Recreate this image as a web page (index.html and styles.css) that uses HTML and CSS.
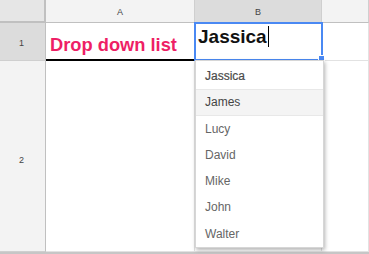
FILE: index.html
```html
<!DOCTYPE html>
<html lang="en">
<head>
    <meta charset="UTF-8">
    <title>Drop down list</title>
    <link rel="stylesheet" href="styles.css">
</head>
<body>
    <div class="sheet">
        <div class="corner"></div>
        <div class="col-head">A</div>
        <div class="col-head selected">B</div>
        <div class="col-head"></div>

        <div class="row-head selected">1</div>
        <div class="cell title-cell">Drop down list</div>
        <div class="cell active-cell">
            <span class="edit-text">Jassica</span><span class="caret"></span>
            <span class="fill-handle"></span>
            <div class="dropdown">
                <div class="option first">Jassica</div>
                <div class="option hover">James</div>
                <div class="option">Lucy</div>
                <div class="option">David</div>
                <div class="option">Mike</div>
                <div class="option">John</div>
                <div class="option">Walter</div>
            </div>
        </div>
        <div class="cell"></div>

        <div class="row-head tall">2</div>
        <div class="cell"></div>
        <div class="cell"></div>
        <div class="cell"></div>
    </div>
</body>
</html>
```

FILE: styles.css
```css
body {
    margin: 0;
    font-family: Arial, "Liberation Sans", sans-serif;
    background: #fff;
}
.sheet {
    display: grid;
    grid-template-columns: 46px 149px 127px 47px;
    grid-template-rows: 23px 38px 191px;
    border-bottom: 2px solid #c6c6c6;
    width: 369px;
}
.corner {
    background: #e6e6e6;
    border-right: 2px solid #c0c0c0;
    border-bottom: 2px solid #c0c0c0;
}
.col-head {
    background: #f3f3f3;
    border-right: 1px solid #cfcfcf;
    border-bottom: 1px solid #c0c0c0;
    font-size: 9px;
    color: #444;
    display: flex;
    align-items: center;
    justify-content: center;
    padding-top: 2px;
}
.col-head.selected {
    background: #dcdcdc;
}
.row-head {
    background: #f3f3f3;
    border-right: 1px solid #c0c0c0;
    border-bottom: 1px solid #cfcfcf;
    font-size: 9px;
    color: #444;
    display: flex;
    align-items: center;
    justify-content: center;
    padding: 2px 2px 0 0;
}
.row-head.tall {
    padding-top: 8px;
}
.row-head.selected {
    background: #dcdcdc;
}
.cell {
    border-right: 1px solid #e2e2e2;
    border-bottom: 1px solid #e2e2e2;
    position: relative;
}
.title-cell {
    border-bottom: 2px solid #000;
    color: #ee1f66;
    font-weight: bold;
    font-size: 18.3px;
    display: flex;
    align-items: flex-end;
    padding: 0 0 3px 4px;
}
.active-cell {
    border: 2px solid #4a89f3;
    margin: -1px -1px 0 -1px;
    z-index: 2;
    padding: 2px 0 0 2px;
    font-weight: bold;
    font-size: 19px;
    color: #111;
    display: flex;
    align-items: flex-start;
}
.edit-text {
    line-height: 22px;
}
.caret {
    width: 1px;
    height: 21px;
    background: #000;
    margin-left: 1px;
}
.fill-handle {
    position: absolute;
    right: -4px;
    bottom: -4px;
    width: 5px;
    height: 6px;
    background: #4a89f3;
    border: 1px solid #fff;
}
.dropdown {
    position: absolute;
    top: 36px;
    left: -1px;
    width: 127px;
    background: #fff;
    box-shadow: 1px 2px 4px rgba(0,0,0,0.3);
    border: 1px solid #d6d6d6;
    padding: 2px 0 0;
    font-weight: normal;
}
.option {
    height: 26.3px;
    line-height: 26px;
    padding-left: 9px;
    font-size: 12px;
    color: #666;
}
.option.first {
    color: #4a4a4a;
    -webkit-text-stroke: 0.2px #4a4a4a;
}
.option.hover {
    background: #f4f4f4;
    border-top: 1px solid #e8e8e8;
    border-bottom: 1px solid #e8e8e8;
    height: 24.3px;
    line-height: 24px;
    color: #444;
}
```
